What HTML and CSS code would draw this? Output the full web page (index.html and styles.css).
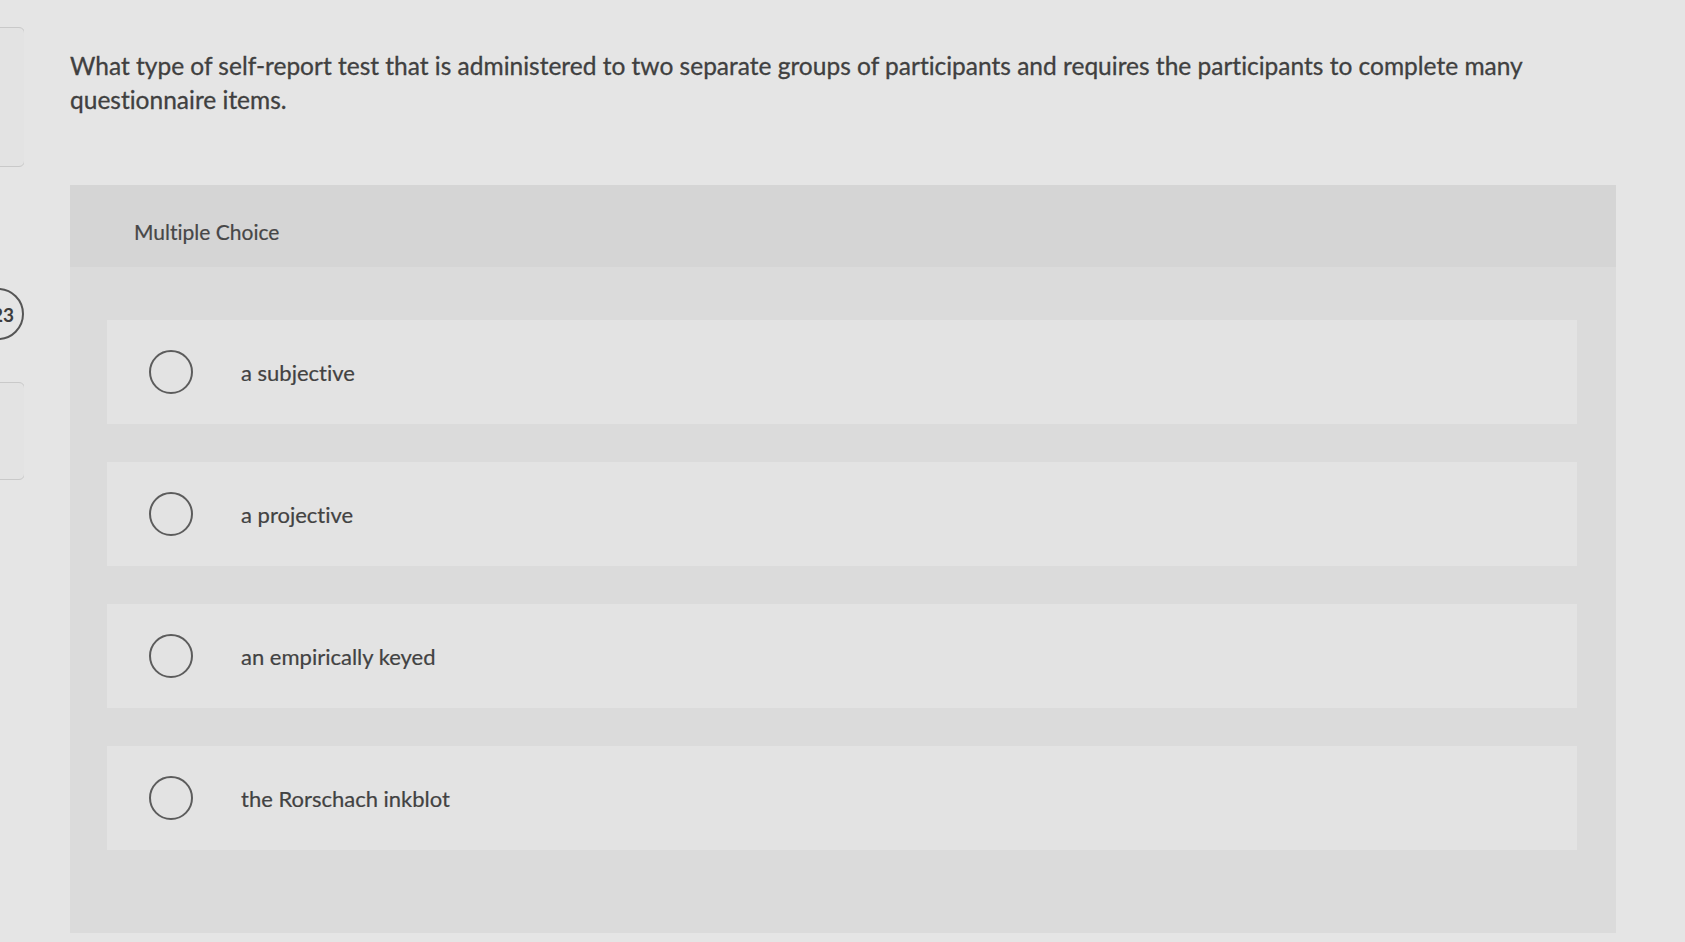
FILE: index.html
```html
<!DOCTYPE html>
<html lang="en">
<head>
<meta charset="utf-8">
<title>Multiple Choice</title>
<link rel="stylesheet" href="styles.css">
</head>
<body>
<div class="page">
  <aside class="rail">
    <div class="rail-box rail-box-top"></div>
    <div class="badge"><span>23</span></div>
    <div class="rail-box rail-box-bottom"></div>
  </aside>
  <main class="main">
    <p class="question">What type of self-report test that is administered to two separate groups of participants and requires the participants to complete many questionnaire items.</p>
    <section class="panel">
      <header class="panel-head">Multiple Choice</header>
      <div class="options">
        <label class="option"><span class="radio"></span><span class="opt-text">a subjective</span></label>
        <label class="option"><span class="radio"></span><span class="opt-text">a projective</span></label>
        <label class="option"><span class="radio"></span><span class="opt-text">an empirically keyed</span></label>
        <label class="option"><span class="radio"></span><span class="opt-text">the Rorschach inkblot</span></label>
      </div>
    </section>
  </main>
</div>
</body>
</html>
```
FILE: styles.css
```css
html, body {
  margin: 0;
  padding: 0;
}
body {
  background: #e5e5e5;
  font-family: "Lato", "Liberation Sans", sans-serif;
  font-variant-ligatures: none;
  color: #464646;
  width: 1685px;
  height: 942px;
  overflow: hidden;
}
.page {
  display: flex;
  height: 942px;
}
.rail {
  width: 24px;
  flex: none;
  overflow: hidden;
  display: flex;
  flex-direction: column;
}
.rail-box {
  width: 40px;
  margin-left: -17px;
  border: 1px solid #c9c9c9;
  border-radius: 6px;
  background: #e3e3e3;
  flex: none;
}
.rail-box-top {
  margin-top: 27px;
  height: 138px;
}
.badge {
  margin-top: 121px;
  margin-left: -28px;
  width: 52px;
  height: 52px;
  flex: none;
  box-sizing: border-box;
  border: 2px solid #555;
  border-radius: 26px;
  display: flex;
  align-items: center;
  justify-content: flex-end;
  padding-right: 8px;
  font-family: "Lato", "Liberation Sans", sans-serif;
  font-weight: 700;
  font-size: 19px;
  color: #3d3d3d;
}
.rail-box-bottom {
  margin-top: 42px;
  height: 96px;
}
.main {
  flex: 1;
  padding: 0 69px 0 46px;
  display: flex;
  flex-direction: column;
}
.question {
  margin: 49px 0 0;
  max-width: 1480px;
  font-size: 24.5px;
  line-height: 34px;
  color: #404040;
  -webkit-text-stroke: 0.3px #404040;
}
.panel {
  margin-top: 68px;
  background: #dbdbdb;
  height: 748px;
  display: flex;
  flex-direction: column;
}
.panel-head {
  height: 82px;
  flex: none;
  background: #d5d5d5;
  display: flex;
  align-items: center;
  padding: 10px 0 0 64px;
  box-sizing: border-box;
  font-size: 21px;
  color: #474747;
  -webkit-text-stroke: 0.2px #474747;
}
.options {
  display: flex;
  flex-direction: column;
  gap: 38px;
  padding: 53px 39px 0 37px;
}
.option {
  height: 104px;
  background: #e3e3e3;
  display: flex;
  align-items: center;
  padding-left: 42px;
}
.radio {
  width: 40px;
  height: 40px;
  border: 2px solid #5c5c5c;
  border-radius: 50%;
  flex: none;
}
.opt-text {
  margin-left: 48px;
  font-size: 22px;
  color: #424242;
  -webkit-text-stroke: 0.2px #424242;
}
```
